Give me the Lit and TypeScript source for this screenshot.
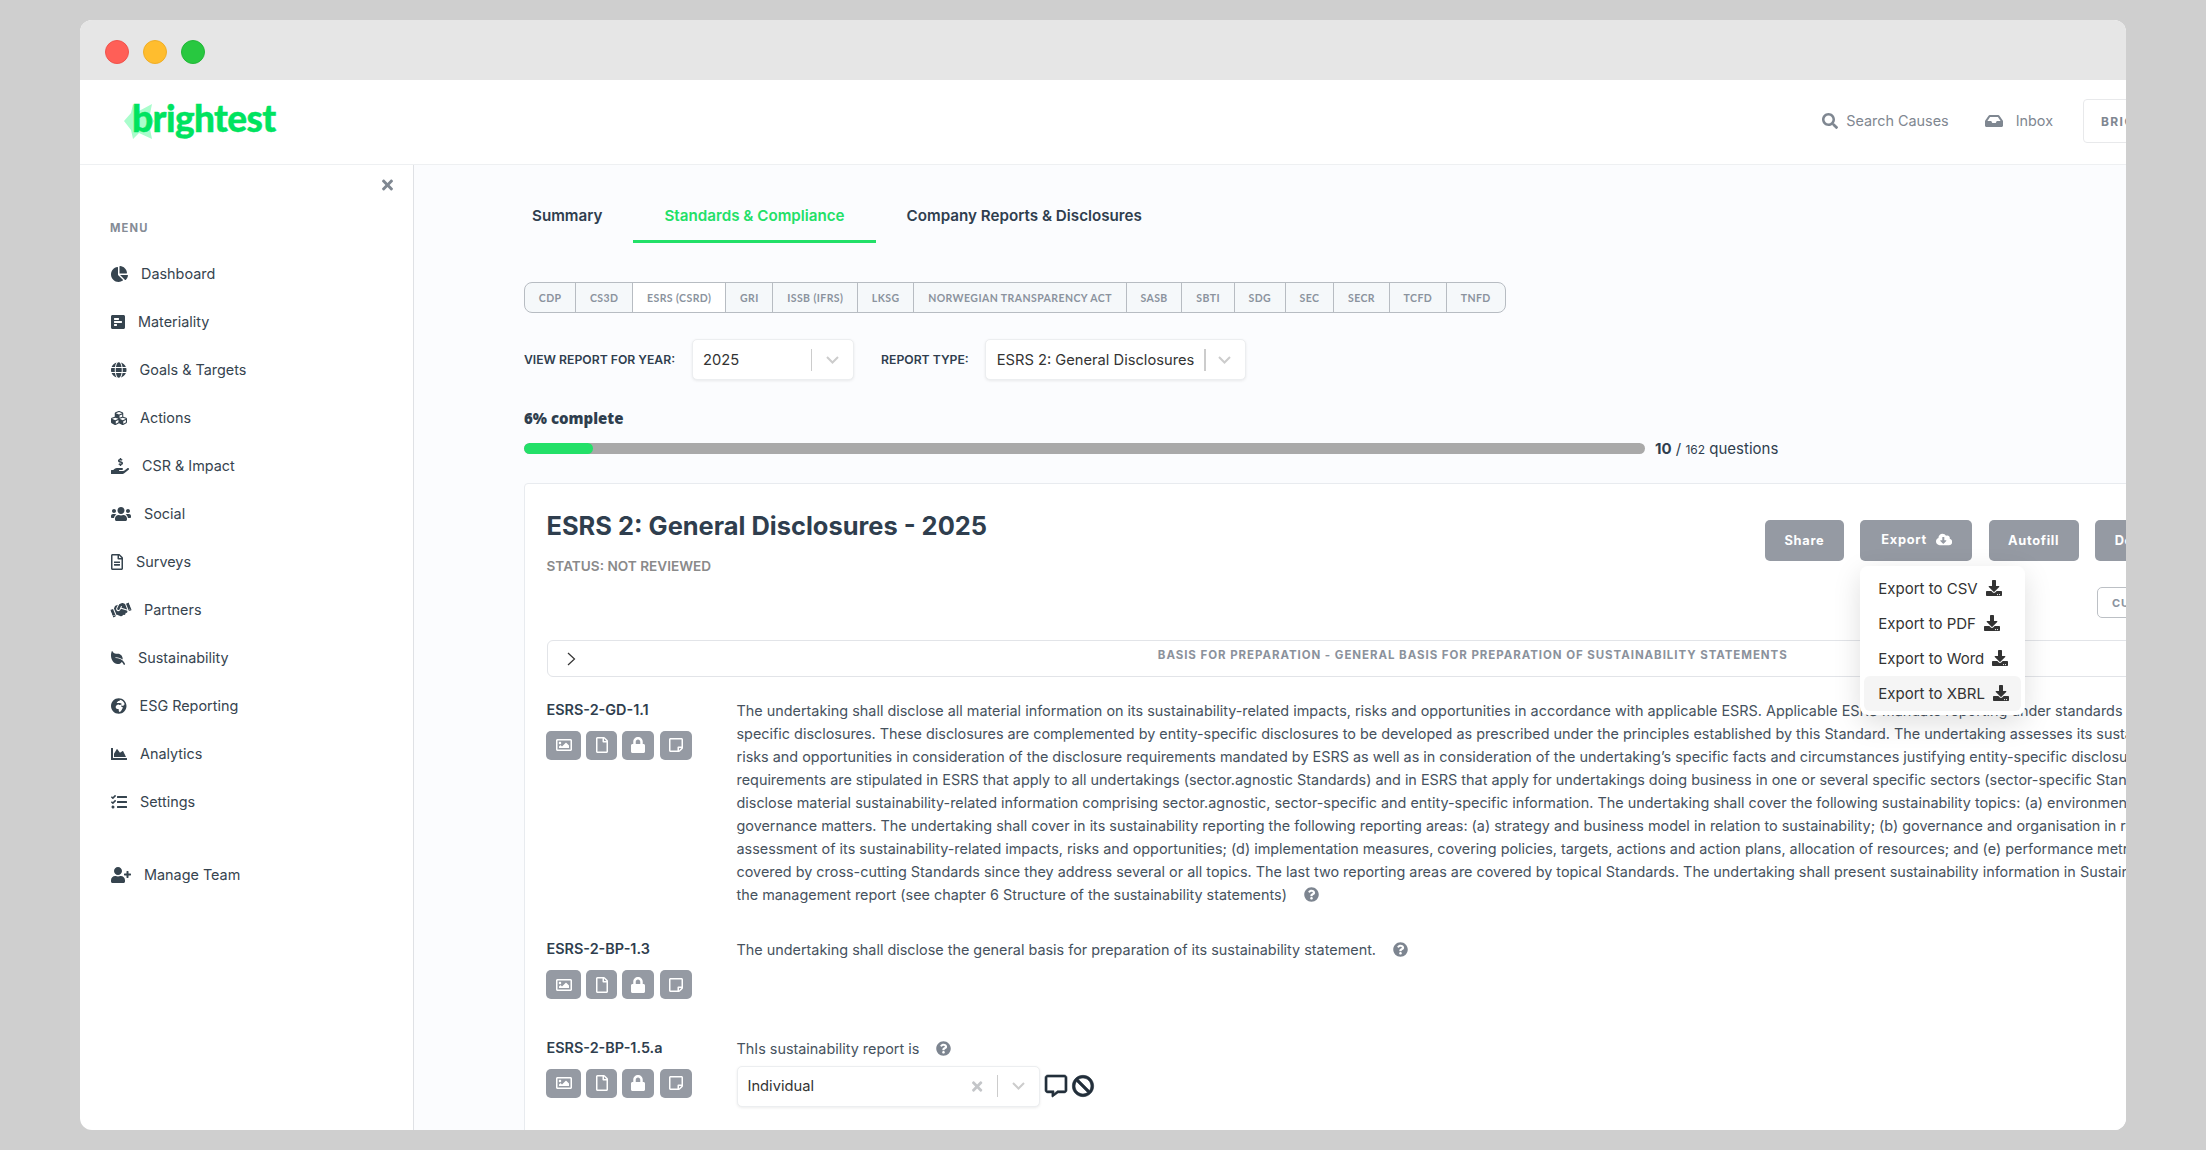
import { LitElement, html, css } from 'lit';
import { customElement } from 'lit/decorators.js';

type Ico = [number, string];

const I: Record<string, Ico> = {
  search: [512, 'M505 442.7L405.3 343c-4.5-4.5-10.6-7-17-7H372c27.6-35.3 44-79.7 44-128C416 93.1 322.9 0 208 0S0 93.1 0 208s93.1 208 208 208c48.3 0 92.7-16.4 128-44v16.3c0 6.4 2.5 12.5 7 17l99.7 99.7c9.4 9.4 24.6 9.4 33.9 0l28.3-28.3c9.4-9.4 9.4-24.6.1-34zM208 336c-70.7 0-128-57.2-128-128 0-70.7 57.2-128 128-128 70.7 0 128 57.2 128 128 0 70.7-57.2 128-128 128z'],
  times: [352, 'M242.72 256l100.07-100.07c12.28-12.28 12.28-32.19 0-44.48l-22.24-22.24c-12.28-12.28-32.19-12.28-44.48 0L176 189.28 75.93 89.21c-12.28-12.28-32.19-12.28-44.48 0L9.21 111.45c-12.28 12.28-12.28 32.19 0 44.48L109.28 256 9.21 356.07c-12.28 12.28-12.28 32.19 0 44.48l22.24 22.24c12.28 12.28 32.2 12.28 44.48 0L176 322.72l100.07 100.07c12.28 12.28 32.2 12.28 44.48 0l22.24-22.24c12.28-12.28 12.28-32.19 0-44.48L242.72 256z'],
  download: [512, 'M216 0h80c13.3 0 24 10.7 24 24v168h87.7c17.8 0 26.7 21.5 14.1 34.1L269.7 378.3c-7.5 7.5-19.8 7.5-27.3 0L90.1 226.1c-12.6-12.6-3.7-34.1 14.1-34.1H192V24c0-13.3 10.7-24 24-24zm296 376v112c0 13.3-10.7 24-24 24H24c-13.3 0-24-10.7-24-24V376c0-13.3 10.7-24 24-24h146.7l49 49c20.1 20.1 52.5 20.1 72.6 0l49-49H488c13.3 0 24 10.7 24 24zm-124 88c0-11-9-20-20-20s-20 9-20 20 9 20 20 20 20-9 20-20zm64 0c0-11-9-20-20-20s-20 9-20 20 9 20 20 20 20-9 20-20z'],
  question: [512, 'M504 256c0 136.997-111.043 248-248 248S8 392.997 8 256C8 119.083 119.043 8 256 8s248 111.083 248 248zM262.655 90c-54.497 0-89.255 22.957-116.549 63.758-3.536 5.286-2.353 12.415 2.715 16.258l34.699 26.31c5.205 3.947 12.621 3.008 16.665-2.122 17.864-22.658 30.113-35.797 57.303-35.797 20.429 0 45.698 13.148 45.698 32.958 0 14.976-12.363 22.667-32.534 33.976C247.128 238.528 216 254.941 216 296v4c0 6.627 5.373 12 12 12h56c6.627 0 12-5.373 12-12v-1.333c0-28.462 83.186-29.647 83.186-106.667 0-58.002-60.165-102-116.531-102zM256 338c-25.365 0-46 20.635-46 46 0 25.364 20.635 46 46 46s46-20.636 46-46c0-25.365-20.635-46-46-46z'],
  ban: [512, 'M256 8C119.034 8 8 119.033 8 256s111.034 248 248 248 248-111.034 248-248S392.967 8 256 8zm130.108 117.892c65.448 65.448 70 165.481 20.677 235.637L150.47 105.216c70.204-49.356 170.226-44.735 235.638 20.676zM125.892 386.108c-65.448-65.448-70-165.481-20.677-235.637L361.53 406.784c-70.203 49.356-170.226 44.736-235.638-20.676z'],
  lock: [448, 'M400 224h-24v-72C376 68.2 307.8 0 224 0S72 68.2 72 152v72H48c-26.5 0-48 21.5-48 48v192c0 26.5 21.5 48 48 48h352c26.5 0 48-21.5 48-48V272c0-26.5-21.5-48-48-48zm-104 0H152v-72c0-39.7 32.3-72 72-72s72 32.3 72 72v72z'],
  inbox: [576, 'M567.938 243.908L462.25 85.374A48.003 48.003 0 0 0 422.311 64H153.689a48 48 0 0 0-39.938 21.374L8.062 243.908A47.994 47.994 0 0 0 0 270.533V400c0 26.51 21.49 48 48 48h480c26.51 0 48-21.49 48-48V270.533a47.994 47.994 0 0 0-8.062-26.625zM162.252 128h251.497l85.333 128H376l-32 64H232l-32-64H76.918l85.334-128z'],
  pie: [544, 'M527.79 288H290.5l158.03 158.03c6.04 6.04 15.98 6.53 22.19.68 38.7-36.46 65.32-85.61 73.13-140.86 1.34-9.46-6.51-17.85-16.06-17.85zm-15.83-64.8C503.72 103.74 408.26 8.28 288.8.04 279.68-.59 272 7.1 272 16.24V240h223.77c9.14 0 16.82-7.68 16.19-16.8zM224 288V50.71c0-9.55-8.39-17.4-17.84-16.06C86.99 51.49-4.1 155.6.14 280.37 4.5 408.51 114.83 513.59 243.03 511.98c50.4-.63 96.97-16.87 135.26-44.03 7.9-5.6 8.42-17.23 1.57-24.08L224 288z'],
  poll: [448, 'M448 432V80c0-26.5-21.5-48-48-48H48C21.5 32 0 53.5 0 80v352c0 26.5 21.5 48 48 48h352c26.5 0 48-21.5 48-48zM112 192c-8.84 0-16-7.16-16-16v-32c0-8.84 7.16-16 16-16h128c8.84 0 16 7.16 16 16v32c0 8.84-7.16 16-16 16H112zm0 96c-8.84 0-16-7.16-16-16v-32c0-8.84 7.16-16 16-16h224c8.84 0 16 7.16 16 16v32c0 8.84-7.16 16-16 16H112zm0 96c-8.84 0-16-7.16-16-16v-32c0-8.84 7.16-16 16-16h64c8.84 0 16 7.16 16 16v32c0 8.84-7.16 16-16 16h-64z'],
  globe: [496, 'M336.5 160C322 70.7 287.8 8 248 8s-74 62.7-88.5 152h177zM152 256c0 22.2 1.2 43.5 3.3 64h185.3c2.1-20.5 3.3-41.8 3.3-64s-1.2-43.5-3.3-64H155.3c-2.1 20.5-3.3 41.8-3.3 64zm324.7-96c-28.6-67.9-86.5-120.4-158-141.6 24.4 33.8 41.2 84.7 50 141.6h108zM177.2 18.4C105.8 39.6 47.8 92.1 19.3 160h108c8.7-56.9 25.5-107.8 49.9-141.6zM487.4 192H372.7c2.1 21 3.3 42.5 3.3 64s-1.2 43-3.3 64h114.6c5.5-20.5 8.6-41.8 8.6-64s-3.1-43.5-8.5-64zM120 256c0-21.5 1.2-43 3.3-64H8.6C3.2 212.5 0 233.8 0 256s3.2 43.5 8.6 64h114.6c-2-21-3.2-42.5-3.2-64zm39.5 96c14.5 89.3 48.7 152 88.5 152s74-62.7 88.5-152h-177zm159.3 141.6c71.4-21.2 129.4-73.7 158-141.6h-108c-8.8 56.9-25.6 107.8-50 141.6zM19.3 352c28.6 67.9 86.5 120.4 158 141.6-24.4-33.8-41.2-84.7-50-141.6h-108z'],
  cubes: [512, 'M488.6 250.2L392 214V105.5c0-15-9.3-28.4-23.4-33.7l-100-37.5c-8.1-3.1-17.1-3.1-25.3 0l-100 37.5c-14.1 5.3-23.4 18.7-23.4 33.7V214l-96.6 36.2C9.3 255.5 0 268.9 0 283.9V394c0 13.6 7.7 26.1 19.9 32.2l100 50c10.1 5.1 22.1 5.1 32.2 0l103.9-52 103.9 52c10.1 5.1 22.1 5.1 32.2 0l100-50c12.2-6.1 19.9-18.6 19.9-32.2V283.9c0-15-9.3-28.4-23.4-33.7zM358 214.8l-85 31.9v-68.2l85-37v73.3zM154 104.1l102-38.2 102 38.2v.6l-102 41.4-102-41.4v-.6zm84 291.1l-85 42.5v-79.1l85-38.8v75.4zm0-112l-102 41.4-102-41.4v-.6l102-38.2 102 38.2v.6zm240 112l-85 42.5v-79.1l85-38.8v75.4zm0-112l-102 41.4-102-41.4v-.6l102-38.2 102 38.2v.6z'],
  hand: [576, 'M271.06,144.3l54.27,14.3a8.59,8.59,0,0,1,6.63,8.1c0,4.6-4.09,8.4-9.12,8.4h-35.6a30,30,0,0,1-11.19-2.2c-5.24-2.2-11.28-1.7-15.3,2l-19,17.5a11.68,11.68,0,0,0-2.25,2.66,11.42,11.42,0,0,0,3.88,15.74,83.77,83.77,0,0,0,34.51,11.5V240c0,8.8,7.83,16,17.37,16h17.37c9.55,0,17.38-7.2,17.38-16V222.4c32.93-3.6,57.84-31,53.5-63-3.15-23-22.46-41.3-46.56-47.7L282.68,97.4a8.59,8.59,0,0,1-6.63-8.1c0-4.6,4.09-8.4,9.12-8.4h35.6A30,30,0,0,1,332,83.1c5.23,2.2,11.28,1.7,15.3-2l19-17.5A11.31,11.31,0,0,0,368.47,61a11.43,11.43,0,0,0-3.84-15.78,83.82,83.82,0,0,0-34.52-11.5V16c0-8.8-7.82-16-17.37-16H295.37C285.82,0,278,7.2,278,16V33.6c-32.89,3.6-57.85,31-53.51,63C227.63,119.6,247,137.9,271.06,144.3ZM565.27,328.1c-11.8-10.7-30.2-10-42.6,0L430.27,402a63.64,63.64,0,0,1-40,14H272a16,16,0,0,1,0-32h78.29c15.9,0,30.71-10.9,33.25-26.6a31.2,31.2,0,0,0,.46-5.46A32,32,0,0,0,352,320H192a117.66,117.66,0,0,0-74.1,26.29L71.4,384H16A16,16,0,0,0,0,400v96a16,16,0,0,0,16,16H372.77a64,64,0,0,0,40-14L564,377a32,32,0,0,0,1.28-48.9Z'],
  users: [640, 'M96 224c35.3 0 64-28.7 64-64s-28.7-64-64-64-64 28.7-64 64 28.7 64 64 64zm448 0c35.3 0 64-28.7 64-64s-28.7-64-64-64-64 28.7-64 64 28.7 64 64 64zm32 32h-64c-17.6 0-33.5 7.1-45.1 18.6 40.3 22.1 68.9 62 75.1 109.4h66c17.7 0 32-14.3 32-32v-32c0-35.3-28.7-64-64-64zm-256 0c61.9 0 112-50.1 112-112S381.9 32 320 32 208 82.1 208 144s50.1 112 112 112zm76.8 32h-8.3c-20.8 10-43.9 16-68.5 16s-47.6-6-68.5-16h-8.3C179.6 288 128 339.6 128 403.2V432c0 26.5 21.5 48 48 48h288c26.5 0 48-21.5 48-48v-28.8c0-63.6-51.6-115.2-115.2-115.2zm-223.7-13.4C161.5 263.1 145.6 256 128 256H64c-35.3 0-64 28.7-64 64v32c0 17.7 14.3 32 32 32h65.9c6.3-47.4 34.9-87.3 75.2-109.4z'],
  fileAlt: [384, 'M288 248v28c0 6.6-5.4 12-12 12H108c-6.6 0-12-5.4-12-12v-28c0-6.6 5.4-12 12-12h168c6.6 0 12 5.4 12 12zm-12 72H108c-6.6 0-12 5.4-12 12v28c0 6.6 5.4 12 12 12h168c6.6 0 12-5.4 12-12v-28c0-6.6-5.4-12-12-12zm108-188.1V464c0 26.5-21.5 48-48 48H48c-26.5 0-48-21.5-48-48V48C0 21.5 21.5 0 48 0h204.1C264.8 0 277 5.1 286 14.1L369.9 98c9 8.9 14.1 21.2 14.1 33.9zm-128-80V128h76.1L256 51.9zM336 464V176H232c-13.3 0-24-10.7-24-24V48H48v416h288z'],
  file: [384, 'M369.9 97.9L286 14C277 5 264.8-.1 252.1-.1H48C21.5 0 0 21.5 0 48v416c0 26.5 21.5 48 48 48h288c26.5 0 48-21.5 48-48V131.9c0-12.7-5.1-25-14.1-34zM332.1 128H256V51.9l76.1 76.1zM48 464V48h160v104c0 13.3 10.7 24 24 24h104v288H48z'],
  image: [512, 'M464 64H48C21.49 64 0 85.49 0 112v288c0 26.51 21.49 48 48 48h416c26.51 0 48-21.49 48-48V112c0-26.51-21.49-48-48-48zm-6 336H54a6 6 0 0 1-6-6V118a6 6 0 0 1 6-6h404a6 6 0 0 1 6 6v276a6 6 0 0 1-6 6zM128 152c-22.091 0-40 17.909-40 40s17.909 40 40 40 40-17.909 40-40-17.909-40-40-40zM96 352h320v-80l-87.515-87.515c-4.686-4.686-12.284-4.686-16.971 0L192 304l-39.515-39.515c-4.686-4.686-12.284-4.686-16.971 0L96 304v48z'],
  note: [448, 'M448 348.106V80c0-26.51-21.49-48-48-48H48C21.49 32 0 53.49 0 80v351.988c0 26.51 21.49 48 48 48h268.118a48 48 0 0 0 33.941-14.059l83.882-83.882A48 48 0 0 0 448 348.106zm-128 80v-76.118h76.118L320 428.106zM400 80v223.988H296c-13.255 0-24 10.745-24 24v104H48V80h352z'],
  comment: [512, 'M448 0H64C28.7 0 0 28.7 0 64v288c0 35.3 28.7 64 64 64h96v84c0 7.1 5.9 12 12 12 2.4 0 4.9-.7 7.1-2.4L304 416h144c35.3 0 64-28.7 64-64V64c0-35.3-28.7-64-64-64zm16 352c0 8.8-7.2 16-16 16H288l-12.8 9.6L208 428v-60H64c-8.8 0-16-7.2-16-16V64c0-8.8 7.2-16 16-16h384c8.8 0 16 7.2 16 16v288z'],
  cloud: [640, 'M537.6 226.6c4.1-10.7 6.4-22.4 6.4-34.6 0-53-43-96-96-96-19.7 0-38.1 6-53.3 16.2C367 64.2 315.3 32 256 32c-88.4 0-160 71.6-160 160 0 2.7.1 5.4.2 8.1C40.2 219.8 0 273.2 0 336c0 79.5 64.5 144 144 144h368c70.7 0 128-57.3 128-128 0-61.9-44-113.6-102.4-125.4zm-132.9 88.7L299.3 420.7c-6.2 6.2-16.4 6.2-22.6 0L171.3 315.3c-10.1-10.1-2.9-27.3 11.3-27.3H248V176c0-8.8 7.2-16 16-16h48c8.8 0 16 7.2 16 16v112h65.4c14.2 0 21.4 17.2 11.3 27.3z'],
  handshake: [640, 'M434.7 64h-85.9c-8 0-15.7 3-21.6 8.4l-98.3 90c-.1.1-.2.3-.3.4-16.6 15.6-16.3 40.5-2.1 56 12.7 13.9 39.4 17.6 56.1 2.7.1-.1.3-.1.4-.2l79.9-73.2c6.5-5.9 16.7-5.5 22.6 1 6 6.5 5.5 16.6-1 22.6l-26.1 23.9L504 313.8c2.9 2.4 5.5 5 7.9 7.7V128l-54.6-54.6c-5.9-6-14.1-9.4-22.6-9.4zM544 128.2v223.9c0 17.7 14.3 32 32 32h64V128.2h-96zm48 223.9c-8.8 0-16-7.2-16-16s7.2-16 16-16 16 7.2 16 16-7.2 16-16 16zM0 384h64c17.7 0 32-14.3 32-32V128.2H0V384zm48-63.9c8.8 0 16 7.2 16 16s-7.2 16-16 16-16-7.2-16-16c0-8.9 7.2-16 16-16zm435.9 18.6L334.6 217.5l-30 27.5c-29.7 27.1-75.2 24.5-101.7-4.4-26.9-29.4-24.8-74.9 4.4-101.7L289.1 64h-83.8c-8.5 0-16.6 3.4-22.6 9.4L128 128v223.9h18.3l90.5 81.9c27.4 22.3 67.7 18.1 90-9.3l.2-.2 17.9 15.5c15.9 13 39.4 10.5 52.3-5.4l31.4-38.6 5.4 4.4c13.7 11.1 33.9 9.1 45-4.7l9.5-11.7c11.2-13.8 9.1-33.9-4.6-45.1z'],
  leaf: [576, 'M546.2 9.7c-5.6-12.5-21.6-13-28.3-1.2C486.9 62.4 431.4 96 368 96h-80C182 96 96 182 96 288c0 7 .8 13.7 1.5 20.5C161.3 262.8 253.4 224 384 224c8.8 0 16 7.2 16 16s-7.2 16-16 16C132.6 256 26 410.1 2.4 468c-6.6 16.3 1.2 34.9 17.5 41.6 16.4 6.8 35-1.1 41.8-17.3 1.5-3.6 20.9-47.9 71.9-90.6 32.4 43.9 94 85.8 174.9 77.2C465.5 467.5 576 326.7 576 154.3c0-50.2-10.8-102.2-29.8-144.6z'],
  earth: [496, 'M248 8C111.03 8 0 119.03 0 256s111.03 248 248 248 248-111.03 248-248S384.97 8 248 8zm160 215.5v6.93c0 5.87-3.32 11.24-8.57 13.86l-15.39 7.7a15.485 15.485 0 0 1-15.53-.97l-18.21-12.14a15.52 15.52 0 0 0-13.5-1.81l-2.65.88c-9.7 3.23-13.66 14.79-7.99 23.3l13.24 19.86c2.87 4.31 7.71 6.9 12.89 6.9h8.21c8.56 0 15.5 6.94 15.5 15.5v11.34c0 3.35-1.09 6.62-3.1 9.3l-18.74 24.98c-1.42 1.9-2.39 4.1-2.83 6.43l-4.3 22.83c-.62 3.29-2.29 6.29-4.76 8.56a159.608 159.608 0 0 0-25 29.16l-13.03 19.55a27.756 27.756 0 0 1-23.09 12.36c-10.51 0-20.12-5.94-24.82-15.34a78.902 78.902 0 0 1-8.33-35.29V367.5c0-8.56-6.94-15.5-15.5-15.5h-25.88c-14.49 0-28.38-5.76-38.63-16a54.659 54.659 0 0 1-16-38.63v-14.06c0-17.19 8.1-33.38 21.85-43.7l27.58-20.69a54.663 54.663 0 0 1 32.78-10.93h.89c8.48 0 16.85 1.97 24.43 5.77l14.72 7.36c3.68 1.84 7.93 2.14 11.83.84l47.31-15.77c6.33-2.11 10.6-8.03 10.6-14.7 0-8.56-6.94-15.5-15.5-15.5h-10.09c-4.11 0-8.05-1.63-10.96-4.54l-6.92-6.92a15.493 15.493 0 0 0-10.96-4.54H199.5c-8.56 0-15.5-6.94-15.5-15.5v-4.4c0-7.11 4.84-13.31 11.74-15.04l14.45-3.61c3.74-.94 7-3.23 9.14-6.44l8.08-12.11c2.87-4.31 7.71-6.9 12.89-6.9h24.21c8.56 0 15.5-6.94 15.5-15.5v-21.7C359.23 71.63 422.86 131.02 441.93 208H423.5c-8.56 0-15.5 6.94-15.5 15.5z'],
  area: [512, 'M500 384c6.6 0 12 5.4 12 12v40c0 6.6-5.4 12-12 12H12c-6.6 0-12-5.4-12-12V76c0-6.6 5.4-12 12-12h40c6.6 0 12 5.4 12 12v308h436zM372.7 159.5L288 216l-85.3-113.7c-5.1-6.8-15.5-6.3-19.9 1L96 248v104h384l-89.9-187.8c-3.2-6.5-11.4-8.7-17.4-4.7z'],
  tasks: [512, 'M139.61 35.5a12 12 0 0 0-17 0L58.93 98.81l-22.7-22.12a12 12 0 0 0-17 0L3.53 92.41a12 12 0 0 0 0 17l47.59 47.4a12.78 12.78 0 0 0 17.61 0l15.59-15.62L156.52 69a12.09 12.09 0 0 0 .09-17zm0 159.19a12 12 0 0 0-17 0l-63.68 63.72-22.7-22.1a12 12 0 0 0-17 0L3.53 252a12 12 0 0 0 0 17L51 316.5a12.77 12.77 0 0 0 17.6 0l15.7-15.69 72.2-72.22a12 12 0 0 0 .09-16.9zM64 368c-26.49 0-48.59 21.5-48.59 48S37.53 464 64 464a48 48 0 0 0 0-96zm432 16H208a16 16 0 0 0-16 16v32a16 16 0 0 0 16 16h288a16 16 0 0 0 16-16v-32a16 16 0 0 0-16-16zm0-320H208a16 16 0 0 0-16 16v32a16 16 0 0 0 16 16h288a16 16 0 0 0 16-16V80a16 16 0 0 0-16-16zm0 160H208a16 16 0 0 0-16 16v32a16 16 0 0 0 16 16h288a16 16 0 0 0 16-16v-32a16 16 0 0 0-16-16z'],
  userPlus: [640, 'M624 208h-64v-64c0-8.8-7.2-16-16-16h-32c-8.8 0-16 7.2-16 16v64h-64c-8.8 0-16 7.2-16 16v32c0 8.8 7.2 16 16 16h64v64c0 8.8 7.2 16 16 16h32c8.8 0 16-7.2 16-16v-64h64c8.8 0 16-7.2 16-16v-32c0-8.8-7.2-16-16-16zm-400 48c70.7 0 128-57.3 128-128S294.7 0 224 0 96 57.3 96 128s57.3 128 128 128zm89.6 32h-16.7c-22.2 10.2-46.9 16-72.9 16s-50.6-5.8-72.9-16h-16.7C60.2 288 0 348.2 0 422.4V464c0 26.5 21.5 48 48 48h352c26.5 0 48-21.5 48-48v-41.6c0-74.2-60.2-134.4-134.4-134.4z'],
};

const icon = (name: string, size = 16) => {
  const [w, d] = I[name];
  return html`<svg class="ico i-${name}" width=${(w * size) / 512} height=${size} viewBox="0 0 ${w} 512" fill="currentColor"><path d=${d}></path></svg>`;
};

const chevron = html`<svg class="chev" width="13" height="8" viewBox="0 0 13 8" fill="none" stroke="currentColor" stroke-width="2"><path d="M1 1l5.5 5.5L12 1"></path></svg>`;

const menu = [
  ['pie', 'Dashboard'],
  ['poll', 'Materiality'],
  ['globe', 'Goals & Targets'],
  ['cubes', 'Actions'],
  ['hand', 'CSR & Impact'],
  ['users', 'Social'],
  ['fileAlt', 'Surveys'],
  ['handshake', 'Partners'],
  ['leaf', 'Sustainability'],
  ['earth', 'ESG Reporting'],
  ['area', 'Analytics'],
  ['tasks', 'Settings'],
];

const chips = ['CDP', 'CS3D', 'ESRS (CSRD)', 'GRI', 'ISSB (IFRS)', 'LKSG', 'NORWEGIAN TRANSPARENCY ACT', 'SASB', 'SBTI', 'SDG', 'SEC', 'SECR', 'TCFD', 'TNFD'];

const paragraph = [
  'The undertaking shall disclose all material information on its sustainability-related impacts, risks and opportunities in accordance with applicable ESRS. Applicable ESRS mandate reporting under standards',
  'specific disclosures. These disclosures are complemented by entity-specific disclosures to be developed as prescribed under the principles established by this Standard. The undertaking assesses its sustainability',
  'risks and opportunities in consideration of the disclosure requirements mandated by ESRS as well as in consideration of the undertaking’s specific facts and circumstances justifying entity-specific disclosures',
  'requirements are stipulated in ESRS that apply to all undertakings (sector.agnostic Standards) and in ESRS that apply for undertakings doing business in one or several specific sectors (sector-specific Standards)',
  'disclose material sustainability-related information comprising sector.agnostic, sector-specific and entity-specific information. The undertaking shall cover the following sustainability topics: (a) environmental',
  'governance matters. The undertaking shall cover in its sustainability reporting the following reporting areas: (a) strategy and business model in relation to sustainability; (b) governance and organisation in relation',
  'assessment of its sustainability-related impacts, risks and opportunities; (d) implementation measures, covering policies, targets, actions and action plans, allocation of resources; and (e) performance metrics',
  'covered by cross-cutting Standards since they address several or all topics. The last two reporting areas are covered by topical Standards. The undertaking shall present sustainability information in Sustainability',
];

const toolButtons = html`<div class="tools">
  <span class="tool wide">${icon('image')}</span>
  <span class="tool">${icon('file')}</span>
  <span class="tool mid">${icon('lock')}</span>
  <span class="tool mid last">${icon('note')}</span>
</div>`;

@customElement('app-root')
export class AppRoot extends LitElement {
  static styles = css`
    :host {
      display: block;
      height: 1150px;
      overflow: hidden;
      background: #cfcfcf;
      font-family: Inter, 'Liberation Sans', sans-serif;
      font-size: 14.4px;
      color: #2f3e4e;
    }
    .page {
      padding: 20px 80px;
    }
    .window {
      height: 1110px;
      border-radius: 12px;
      overflow: hidden;
      background: #fff;
      display: flex;
      flex-direction: column;
    }
    .titlebar {
      height: 60px;
      flex: none;
      box-sizing: border-box;
      background: #e6e6e6;
      display: flex;
      align-items: center;
      gap: 14px;
      padding: 3px 0 0 25px;
    }
    .dot {
      width: 24px;
      height: 24px;
      border-radius: 50%;
      box-sizing: border-box;
    }
    .red { background: #ff5f57; border: 1px solid #f0534c; }
    .yellow { background: #ffbd2e; border: 1px solid #efae27; }
    .green { background: #28c840; border: 1px solid #22b838; }

    .topbar {
      height: 84px;
      flex: none;
      box-sizing: content-box;
      border-bottom: 1px solid #eef0f2;
      display: flex;
      align-items: center;
      color: #7f8791;
    }
    .logo {
      position: relative;
      margin: -8px 0 0 52px;
      font-family: Lato, sans-serif;
      font-weight: 900;
      font-size: 37px;
      line-height: 44px;
      letter-spacing: -0.6px;
      color: #00e35f;
      -webkit-text-stroke: 0.4px #00e35f;
    }
    .logo span { position: relative; }
    .logo svg {
      position: absolute;
      left: -8px;
      top: 8px;
    }
    .top-link {
      display: flex;
      align-items: center;
      gap: 8px;
      margin-top: -3px;
    }
    .top-search { margin-left: auto; }
    .top-inbox { margin-left: 36px; gap: 13px; }
    .org {
      margin: -2px -57px 0 30px;
      width: 100px;
      height: 44px;
      box-sizing: border-box;
      border: 1px solid #e8e9eb;
      border-radius: 4px;
      padding-left: 17px;
      display: flex;
      align-items: center;
      font-size: 12px;
      font-weight: 700;
      letter-spacing: 1.4px;
      overflow: hidden;
    }

    .body {
      flex: 1;
      display: flex;
      min-height: 0;
    }
    .sidebar {
      width: 334px;
      flex: none;
      box-sizing: border-box;
      border-right: 1px solid #dfe1e5;
      padding: 12px 0 0 31px;
    }
    .close {
      display: flex;
      justify-content: flex-end;
      padding-right: 20px;
      color: #7f8791;
    }
    .menu-title {
      margin: 27.5px 0 0 -1px;
      font-size: 11.2px;
      line-height: 14px;
      font-weight: 700;
      letter-spacing: 1.2px;
      color: #858c96;
    }
    .nav {
      margin-top: 15.2px;
    }
    .nav-item {
      height: 48px;
      display: flex;
      align-items: center;
      gap: 13px;
      color: #36444f;
    }
    .nav-item.team { margin-top: 25px; }
    .ico.i-leaf { transform: scale(-0.78, 0.86); margin: 0 -2px; }
    .ico.i-handshake { transform: rotate(-22deg); }

    .main {
      flex: 1;
      min-width: 0;
      background: #fbfcfe;
      padding: 41px 0 0 110px;
      overflow: hidden;
    }
    .tabs {
      display: flex;
      margin-left: -23px;
    }
    .tab {
      padding: 0 31px 14px;
      line-height: 20px;
      font-size: 15.2px;
      font-weight: 600;
      border-bottom: 3px solid transparent;
    }
    .tab.active {
      color: #23e068;
      border-bottom-color: #23e068;
    }
    .chips {
      margin-top: 39px;
      display: inline-flex;
      height: 31px;
      box-sizing: border-box;
      border: 1.5px solid #b7bcc2;
      border-radius: 8px;
      overflow: hidden;
      background: #f5f8fa;
    }
    .chip {
      padding: 0 13.75px;
      display: flex;
      align-items: center;
      font-family: Lato, sans-serif;
      font-size: 10.5px;
      font-weight: 700;
      letter-spacing: 0.43px;
      color: #8b939e;
      border-left: 1.5px solid #b7bcc2;
    }
    .chip:first-child { border-left: 0; }
    .chip.active { background: #fff; }
    .filters {
      margin-top: 26px;
      display: flex;
      align-items: center;
      font-size: 12.2px;
      font-weight: 600;
    }
    .select {
      height: 41px;
      box-sizing: border-box;
      background: #fff;
      border: 1px solid #eceef0;
      border-radius: 5px;
      box-shadow: 0 1px 3px rgba(0, 0, 0, 0.08);
      display: flex;
      align-items: center;
      font-size: 14.7px;
      font-weight: 400;
      color: #333;
      padding-left: 10px;
    }
    .select .value { flex: 1; white-space: nowrap; }
    .select .sep {
      flex: none;
      width: 1px;
      height: 22px;
      background: #ccc;
    }
    .select .chev {
      flex: none;
      color: #ccc;
      margin: 0 14px;
    }
    .select .clear {
      color: #c4c6c9;
      margin-right: 14px;
      display: flex;
    }
    .year { width: 162px; margin: 0 27px 0 17px; }
    .type { width: 261px; margin-left: 16px; padding-left: 11px; }
    .type .value { flex: none; margin-right: 10px; }
    .type .sep { width: 2px; }
    .type .chev { margin-left: 12px; }
    .done {
      margin-top: 28px;
      font-family: 'Open Sans', sans-serif;
      font-weight: 800;
      font-size: 15px;
      line-height: 20px;
    }
    .progress-row {
      margin-top: 10px;
      height: 20px;
      display: flex;
      align-items: center;
      gap: 10px;
      white-space: nowrap;
      font-size: 15px;
    }
    .bar {
      width: 1121px;
      height: 11px;
      border-radius: 6px;
      background: #a9a9a9;
      overflow: hidden;
    }
    .bar div {
      height: 100%;
      border-radius: 6px;
      background: #23e068;
    }
    .progress-row b { font-size: 15px; font-weight: 700; }
    .progress-row small { font-size: 12px; }

    .card {
      margin-top: 25px;
      width: 1896px;
      min-height: 700px;
      box-sizing: border-box;
      background: #fff;
      border: 1px solid #e8ebef;
      border-radius: 4px;
      padding: 0 22px 0 21.5px;
    }
    .card-head {
      height: 156px;
      display: flex;
    }
    .heading { width: 1218.5px; flex: none; padding-top: 24px; }
    h1 {
      margin: 0;
      font-size: 25.45px;
      line-height: 36px;
      font-weight: 700;
    }
    .status {
      margin-top: 13px;
      font-size: 13.6px;
      line-height: 18px;
      font-weight: 600;
      color: #8a8a8a;
    }
    .actions { padding-top: 36px; }
    .btns {
      display: flex;
      gap: 16.5px;
    }
    .btn {
      position: relative;
      height: 41px;
      box-sizing: border-box;
      padding: 0 19.5px;
      border-radius: 5px;
      background: #959aa3;
      color: #fff;
      font-size: 12.8px;
      font-weight: 700;
      letter-spacing: 0.7px;
      display: flex;
      align-items: center;
      gap: 9px;
      white-space: nowrap;
    }
    .btn.wide { padding: 0 20px 3px 21px; }
    .dropdown {
      position: absolute;
      z-index: 5;
      left: 0;
      top: 46px;
      width: 165px;
      padding: 4.5px 4px;
      box-sizing: border-box;
      background: #fff;
      border-radius: 8px;
      box-shadow: 0 8px 28px rgba(0, 0, 0, 0.13);
      color: #333;
      font-size: 15px;
      font-weight: 400;
      letter-spacing: 0;
    }
    .drop-item {
      height: 35px;
      padding-left: 14px;
      border-radius: 6px;
      display: flex;
      align-items: center;
      gap: 8px;
    }
    .drop-item.hover { background: #f5f5f5; }
    .mini {
      margin: 26px 0 0 332px;
      width: 120px;
      height: 31px;
      box-sizing: border-box;
      border: 1px solid #bcc0c5;
      border-radius: 5px;
      padding-left: 14px;
      display: flex;
      align-items: center;
      font-size: 11px;
      font-weight: 700;
      letter-spacing: 0.8px;
      color: #8b939e;
    }
    .accordion {
      height: 37px;
      box-sizing: border-box;
      border: 1px solid #e2e4e8;
      border-radius: 6px;
      display: flex;
      align-items: center;
      padding-left: 19px;
    }
    .accordion .label {
      flex: 1;
      text-align: center;
      padding: 0 26px 8px 0;
      font-size: 11.5px;
      font-weight: 700;
      letter-spacing: 0.94px;
      color: #8b929c;
    }
    .row {
      margin-top: 21.5px;
      display: grid;
      grid-template-columns: 190px 1fr;
      margin-bottom: 32.4px;
    }
    .row + .row { margin-top: 0; }
    .code {
      font-size: 14.4px;
      line-height: 22px;
      font-weight: 600;
    }
    .tools {
      display: flex;
      gap: 5px;
      margin: 10px 0 5px -0.5px;
      color: #fff;
    }
    .tool {
      width: 31px;
      height: 29px;
      border-radius: 5px;
      background: #959aa3;
      display: flex;
      align-items: center;
      justify-content: center;
    }
    .tool.wide { width: 35px; }
    .tool.mid { width: 32px; }
    .tool.last { margin-left: 1px; }
    .text {
      line-height: 23.04px;
      font-size: 14.4px;
      color: #46525e;
      white-space: nowrap;
    }
    .text > .ico, .text > div > .ico { color: #7d8590; margin-left: 13px; vertical-align: -2px; }
    .answer {
      margin-top: 6px;
      display: flex;
      align-items: center;
      gap: 5px;
      color: #222e3a;
    }
    .answer .select { width: 303px; }
    .text .answer > .ico {
      margin: 0;
      color: #222e3a;
      stroke: currentColor;
      stroke-width: 14;
      overflow: visible;
    }
  `;

  render() {
    return html`
      <div class="page">
        <div class="window">
          <div class="titlebar">
            <div class="dot red"></div>
            <div class="dot yellow"></div>
            <div class="dot green"></div>
          </div>
          <div class="topbar">
            <div class="logo">
              <svg width="30" height="35" viewBox="0 0 30 35" fill="#a9fdcc"><polygon points="9,0 15,7 28,0 26,10 30,17 26,25 28,35 15,29 9,35 7,26 0,17 7,9"></polygon></svg>
              <span>brightest</span>
            </div>
            <div class="top-link top-search">${icon('search')} Search Causes</div>
            <div class="top-link top-inbox">${icon('inbox')} Inbox</div>
            <div class="org">BRIGHTEST</div>
          </div>
          <div class="body">
            <div class="sidebar">
              <div class="close">${icon('times')}</div>
              <div class="menu-title">MENU</div>
              <div class="nav">
                ${menu.map(([ic, label]) => html`<div class="nav-item">${icon(ic)}<span>${label}</span></div>`)}
                <div class="nav-item team">${icon('userPlus')}<span>Manage Team</span></div>
              </div>
            </div>
            <div class="main">
              <div class="tabs">
                <div class="tab">Summary</div>
                <div class="tab active">Standards &amp; Compliance</div>
                <div class="tab">Company Reports &amp; Disclosures</div>
              </div>
              <div class="chips">
                ${chips.map((c) => html`<div class="chip ${c === 'ESRS (CSRD)' ? 'active' : ''}">${c}</div>`)}
              </div>
              <div class="filters">
                <span>VIEW REPORT FOR YEAR:</span>
                <div class="select year"><span class="value">2025</span><span class="sep"></span>${chevron}</div>
                <span>REPORT TYPE:</span>
                <div class="select type"><span class="value">ESRS 2: General Disclosures</span><span class="sep"></span>${chevron}</div>
              </div>
              <div class="done">6% complete</div>
              <div class="progress-row">
                <div class="bar"><div style="width:${(10 / 162) * 100}%"></div></div>
                <span><b>10</b> / <small>162</small> questions</span>
              </div>
              <div class="card">
                <div class="card-head">
                  <div class="heading">
                    <h1>ESRS 2: General Disclosures - 2025</h1>
                    <div class="status">STATUS: NOT REVIEWED</div>
                  </div>
                  <div class="actions">
                    <div class="btns">
                      <div class="btn">Share</div>
                      <div class="btn wide">
                        Export ${icon('cloud', 13)}
                        <div class="dropdown">
                          ${['CSV', 'PDF', 'Word', 'XBRL'].map(
                            (t) => html`<div class="drop-item ${t === 'XBRL' ? 'hover' : ''}">Export to ${t} ${icon('download')}</div>`
                          )}
                        </div>
                      </div>
                      <div class="btn">Autofill</div>
                      <div class="btn">Delete</div>
                    </div>
                    <div class="mini">CUSTOM</div>
                  </div>
                </div>
                <div class="accordion">
                  <svg width="9" height="14" viewBox="0 0 9 14" fill="none" stroke="#333" stroke-width="1.2"><path d="M1 1l6.5 6L1 13"></path></svg>
                  <div class="label">BASIS FOR PREPARATION - GENERAL BASIS FOR PREPARATION OF SUSTAINABILITY STATEMENTS</div>
                </div>
                <div class="row">
                  <div><div class="code">ESRS-2-GD-1.1</div>${toolButtons}</div>
                  <div class="text">
                    ${paragraph.map((l) => html`<div>${l}</div>`)}
                    <div>the management report (see chapter 6 Structure of the sustainability statements) ${icon('question', 15)}</div>
                  </div>
                </div>
                <div class="row">
                  <div><div class="code">ESRS-2-BP-1.3</div>${toolButtons}</div>
                  <div class="text">The undertaking shall disclose the general basis for preparation of its sustainability statement. ${icon('question', 15)}</div>
                </div>
                <div class="row">
                  <div><div class="code">ESRS-2-BP-1.5.a</div>${toolButtons}</div>
                  <div class="text">
                    ThIs sustainability report is ${icon('question', 15)}
                    <div class="answer">
                      <div class="select">
                        <span class="value">Individual</span>
                        <span class="clear">${icon('times', 15)}</span>
                        <span class="sep"></span>
                        ${chevron}
                      </div>
                      ${icon('comment', 22)} ${icon('ban', 22)}
                    </div>
                  </div>
                </div>
              </div>
            </div>
          </div>
        </div>
      </div>
    `;
  }
}
